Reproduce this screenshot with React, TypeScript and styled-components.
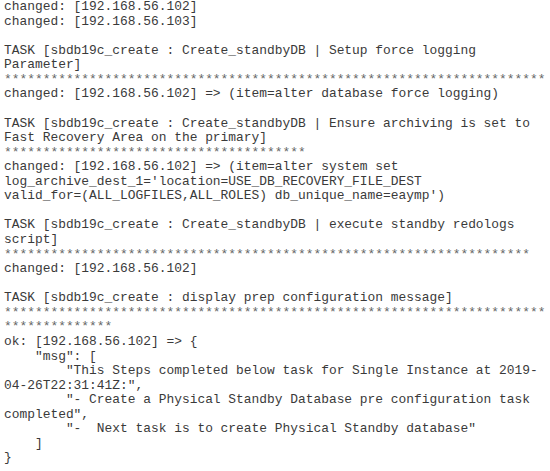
import React from "react";
import styled, { createGlobalStyle } from "styled-components";

const GlobalStyle = createGlobalStyle`
  html, body {
    margin: 0;
    padding: 0;
    background: #ffffff;
  }
`;

const Terminal = styled.div`
  display: flex;
  flex-direction: column;
  width: 550px;
  height: 471px;
  box-sizing: border-box;
  padding: 0 0 0 4px;
  background: #ffffff;
  color: #3a3a3a;
  font-family: "Courier New", "Nimbus Mono PS", "Nimbus Mono L", FreeMono, "Liberation Mono", monospace;
  font-size: 12.9px;
  line-height: 14.57px;
  overflow: hidden;
`;

const Line = styled.div<{ $stars?: boolean }>`
  white-space: pre;
  height: 14.57px;
  color: ${(p) => (p.$stars ? "#666666" : "inherit")};
`;

const stars = (n: number) => "*".repeat(n);

type Row = { text: string; stars?: boolean };

const rows: Row[] = [
  { text: "changed: [192.168.56.102]" },
  { text: "changed: [192.168.56.103]" },
  { text: "" },
  { text: "TASK [sbdb19c_create : Create_standbyDB | Setup force logging" },
  { text: "Parameter]" },
  { text: stars(70), stars: true },
  { text: "changed: [192.168.56.102] => (item=alter database force logging)" },
  { text: "" },
  { text: "TASK [sbdb19c_create : Create_standbyDB | Ensure archiving is set to" },
  { text: "Fast Recovery Area on the primary]" },
  { text: stars(39), stars: true },
  { text: "changed: [192.168.56.102] => (item=alter system set" },
  { text: "log_archive_dest_1='location=USE_DB_RECOVERY_FILE_DEST" },
  { text: "valid_for=(ALL_LOGFILES,ALL_ROLES) db_unique_name=eaymp')" },
  { text: "" },
  { text: "TASK [sbdb19c_create : Create_standbyDB | execute standby redologs" },
  { text: "script]" },
  { text: stars(68), stars: true },
  { text: "changed: [192.168.56.102]" },
  { text: "" },
  { text: "TASK [sbdb19c_create : display prep configuration message]" },
  { text: stars(70), stars: true },
  { text: stars(14), stars: true },
  { text: "ok: [192.168.56.102] => {" },
  { text: '    "msg": [' },
  { text: '        "This Steps completed below task for Single Instance at 2019-' },
  { text: '04-26T22:31:41Z:",' },
  { text: '        "- Create a Physical Standby Database pre configuration task' },
  { text: 'completed",' },
  { text: '        "-  Next task is to create Physical Standby database"' },
  { text: "    ]" },
  { text: "}" },
];

export default function App() {
  return (
    <>
      <GlobalStyle />
      <Terminal>
        {rows.map((r, i) => (
          <Line key={i} $stars={r.stars}>
            {r.text === "" ? "\u00a0" : r.text}
          </Line>
        ))}
      </Terminal>
    </>
  );
}
